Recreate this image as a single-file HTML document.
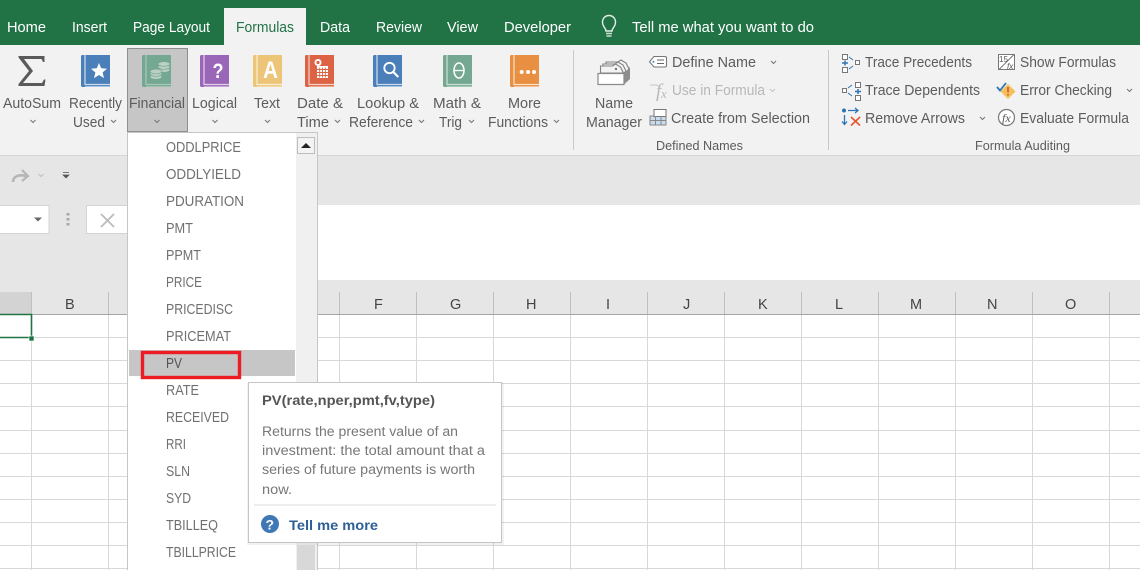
<!DOCTYPE html>
<html><head><meta charset="utf-8"><style>
html,body{margin:0;padding:0;background:#fff;width:1140px;height:570px;overflow:hidden}
svg{display:block;filter:blur(.3px)}
text{font-family:"Liberation Sans",sans-serif;font-size:14.5px;fill:#5c5c5c}
.tab{fill:#fff}
.m{fill:#707070;font-size:14.5px}
.g{font-size:12.5px}
.c{fill:#444;font-size:14.5px}
.chev{fill:none;stroke:#777;stroke-width:1.1}
</style></head><body>
<svg width="1140" height="570" viewBox="0 0 1140 570">
<rect width="1140" height="570" fill="#fff"/>
<!-- grid -->
<g stroke="#d8d8d8" stroke-width="1">
<path d="M0 337.5H1140M0 360.5H1140M0 383.5H1140M0 406.5H1140M0 430.5H1140M0 453.5H1140M0 476.5H1140M0 499.5H1140M0 522.5H1140M0 545.5H1140M0 568.5H1140"/>
<path d="M31.5 315V570M108.5 315V570M339.5 315V570M416.5 315V570M493.5 315V570M570.5 315V570M647.5 315V570M724.5 315V570M801.5 315V570M878.5 315V570M955.5 315V570M1032.5 315V570M1109.5 315V570"/>
</g>
<!-- grey zones -->
<rect x="0" y="155" width="1140" height="50" fill="#e6e6e6"/>
<rect x="0" y="205" width="318" height="75" fill="#e6e6e6"/>
<rect x="0" y="280" width="1140" height="35" fill="#e6e6e6"/>
<rect x="0" y="292" width="31" height="22" fill="#d3d3d3"/>
<path d="M0 314.5H1140" stroke="#a6a6a6"/>
<g stroke="#bfbfbf"><path d="M31.5 292V314M108.5 292V314M339.5 292V314M416.5 292V314M493.5 292V314M570.5 292V314M647.5 292V314M724.5 292V314M801.5 292V314M878.5 292V314M955.5 292V314M1032.5 292V314M1109.5 292V314"/></g>
<g>
<text class="c" x="65" y="309">B</text><text class="c" x="374" y="309">F</text><text class="c" x="450" y="309">G</text><text class="c" x="526" y="309">H</text><text class="c" x="606" y="309">I</text><text class="c" x="683" y="309">J</text><text class="c" x="758" y="309">K</text><text class="c" x="835" y="309">L</text><text class="c" x="910" y="309">M</text><text class="c" x="987" y="309">N</text><text class="c" x="1065" y="309">O</text>
</g>
<!-- selected cell -->
<path d="M0 314.5H31.5V337.5H0" fill="#fff" stroke="#217346" stroke-width="1.6"/>
<rect x="29" y="336" width="5" height="5" fill="#217346" stroke="#fff" stroke-width=".6"/>
<!-- formula bar -->
<rect x="-2" y="205.5" width="51" height="28" fill="#fff" stroke="#d4d4d4"/>
<path d="M34 217.5h8l-4 4z" fill="#666"/>
<g fill="#a8a8a8"><rect x="66.5" y="213" width="3" height="2.5"/><rect x="66.5" y="218" width="3" height="2.5"/><rect x="66.5" y="223" width="3" height="2.5"/></g>
<rect x="86.5" y="205.5" width="50" height="28" fill="#fff" stroke="#d4d4d4"/>
<path d="M101 214l13 13M114 214l-13 13" stroke="#bbb" stroke-width="1.8"/>
<!-- QAT -->
<path d="M13 182c0-5 5-8 13-6" fill="none" stroke="#b5b5b5" stroke-width="2.6"/>
<path d="M22 170l6 6-6 5" fill="none" stroke="#b5b5b5" stroke-width="2.2"/>
<path d="M38.5 174l2.5 2.500 2.5-2.500" fill="none" stroke="#bdbdbd"/>
<path d="M63 172.500h6M63 175h6l-3 3z" fill="#555" stroke="#555" stroke-width=".7"/>
<!-- title tabs -->
<rect x="0" y="0" width="1140" height="45" fill="#217346"/>
<rect x="224" y="8" width="82" height="38" fill="#f2f2f2"/>
<text class="tab" x="7" y="32" textLength="39" lengthAdjust="spacingAndGlyphs">Home</text>
<text class="tab" x="72" y="32" textLength="35" lengthAdjust="spacingAndGlyphs">Insert</text>
<text class="tab" x="133" y="32" textLength="77" lengthAdjust="spacingAndGlyphs">Page Layout</text>
<text x="236" y="32" textLength="58" lengthAdjust="spacingAndGlyphs" style="fill:#217346">Formulas</text>
<text class="tab" x="320" y="32" textLength="30" lengthAdjust="spacingAndGlyphs">Data</text>
<text class="tab" x="376" y="32" textLength="46" lengthAdjust="spacingAndGlyphs">Review</text>
<text class="tab" x="447" y="32" textLength="31" lengthAdjust="spacingAndGlyphs">View</text>
<text class="tab" x="504" y="32" textLength="67" lengthAdjust="spacingAndGlyphs">Developer</text>
<text class="tab" x="632" y="32" textLength="182" lengthAdjust="spacingAndGlyphs">Tell me what you want to do</text>
<path d="M606 31c0-3-3.500-4-3.500-9a6.500 6.500 0 0 1 13 0c0 5-3.500 6-3.500 9z" fill="none" stroke="#e4efe8" stroke-width="1.4"/>
<path d="M606 33.500h6M606.500 36h5" stroke="#cfe0d6" stroke-width="1.5"/>
<!-- ribbon -->
<rect x="0" y="45" width="1140" height="110" fill="#f2f2f2"/>
<path d="M0 155.500H1140" stroke="#d6d6d6"/>
<path d="M573.500 50V150M828.500 50V150" stroke="#c9c9c9"/>
<!-- Financial highlight -->
<rect x="127.500" y="48.500" width="60" height="83" fill="#c6c6c6" stroke="#8f8f8f"/>
<!-- Sigma -->
<path d="M18.500 56H44.500V62H43L41.500 59H24L33 71 23 83H42L44 79.500H45.500L44.500 86H18.500V84L29 71 18.500 57.500z" fill="#5a5a5a"/>
<!-- Books -->
<g transform="translate(81,55)"><path d="M1 0H29V32H1L0 31V1z" fill="#4a7fba"/><path d="M4 0V29.500H29" fill="none" stroke="#cfdeee" stroke-width="1.200"/><path d="M4 31.500H29" stroke="#a9c4e0"/><path d="M18 8l2.200 5.300 5.800.4-4.400 3.800 1.400 5.600-5-3.100-5 3.100 1.400-5.600-4.400-3.800 5.800-.4z" fill="#fff"/></g>
<g transform="translate(142,55)"><path d="M1 0H29V32H1L0 31V1z" fill="#74a892"/><path d="M4 0V29.500H29" fill="none" stroke="#a9c8b8" stroke-width="1.200"/><path d="M4 31.500H29" stroke="#9fc0b0"/>
<g fill="#bcd0c4" stroke="#74a892" stroke-width=".7"><ellipse cx="22" cy="15" rx="6" ry="2.300"/><ellipse cx="22" cy="12" rx="6" ry="2.300"/><ellipse cx="22" cy="9" rx="6" ry="2.300"/><ellipse cx="14" cy="22" rx="6" ry="2.300"/><ellipse cx="14" cy="19" rx="6" ry="2.300"/><ellipse cx="14" cy="16.500" rx="6" ry="2.300"/></g></g>
<g transform="translate(200,55)"><path d="M1 0H29V32H1L0 31V1z" fill="#9a66b8"/><path d="M4 0V29.500H29" fill="none" stroke="#e2d2ec" stroke-width="1.200"/><path d="M4 31.500H29" stroke="#c4a6d6"/><text x="12.500" y="23" textLength="11" lengthAdjust="spacingAndGlyphs" style="font-size:21px;font-weight:bold;fill:#fff">?</text></g>
<g transform="translate(253,55)"><path d="M1 0H29V32H1L0 31V1z" fill="#edc578"/><path d="M4 0V29.500H29" fill="none" stroke="#faeed6" stroke-width="1.200"/><path d="M4 31.500H29" stroke="#f3d9a6"/><text x="10" y="23" textLength="15" lengthAdjust="spacingAndGlyphs" style="font-size:24px;font-weight:bold;fill:#fff">A</text></g>
<g transform="translate(305,55)"><path d="M1 0H29V32H1L0 31V1z" fill="#dc6344"/><path d="M4 0V29.500H29" fill="none" stroke="#f4d3c8" stroke-width="1.200"/><path d="M4 31.500H29" stroke="#eba892"/><rect x="12" y="11" width="11" height="12" fill="#fff"/><circle cx="13" cy="7.500" r="3.500" fill="#fff"/><circle cx="13" cy="7.500" r="1.600" fill="#dc6344"/><path d="M14.700 12.500v10M17.500 12.500v10M20.300 12.500v10M12 14.500h11M12 17.500h11M12 20.500h11" stroke="#dc6344" stroke-width=".9"/></g>
<g transform="translate(373,55)"><path d="M1 0H29V32H1L0 31V1z" fill="#4a7fba"/><path d="M4 0V29.500H29" fill="none" stroke="#cfdeee" stroke-width="1.200"/><path d="M4 31.500H29" stroke="#a9c4e0"/><circle cx="16.500" cy="13" r="5.200" fill="none" stroke="#fff" stroke-width="1.800"/><path d="M20.300 17l5 5" stroke="#fff" stroke-width="2.200"/></g>
<g transform="translate(443,55)"><path d="M1 0H29V32H1L0 31V1z" fill="#74a892"/><path d="M4 0V29.500H29" fill="none" stroke="#d0e2d8" stroke-width="1.200"/><path d="M4 31.500H29" stroke="#a6c8b6"/><ellipse cx="16" cy="15.500" rx="5" ry="7.500" fill="none" stroke="#fff" stroke-width="1.500"/><path d="M11 15.500h10" stroke="#fff" stroke-width="1.300"/></g>
<g transform="translate(510,55)"><path d="M1 0H29V32H1L0 31V1z" fill="#e98f42"/><path d="M4 0V29.500H29" fill="none" stroke="#f9e0c8" stroke-width="1.200"/><path d="M4 31.500H29" stroke="#f2c094"/><circle cx="11.700" cy="17" r="2" fill="#fff"/><circle cx="18" cy="17" r="2" fill="#fff"/><circle cx="24" cy="17" r="2" fill="#fff"/></g>
<!-- Ribbon labels -->
<text x="3" y="108" textLength="58" lengthAdjust="spacingAndGlyphs">AutoSum</text>
<text x="69" y="108" textLength="53" lengthAdjust="spacingAndGlyphs">Recently</text>
<text x="73" y="127" textLength="32" lengthAdjust="spacingAndGlyphs">Used</text>
<text x="129" y="108" textLength="56" lengthAdjust="spacingAndGlyphs">Financial</text>
<text x="192" y="108" textLength="45" lengthAdjust="spacingAndGlyphs">Logical</text>
<text x="254" y="108" textLength="26" lengthAdjust="spacingAndGlyphs">Text</text>
<text x="297" y="108" textLength="46" lengthAdjust="spacingAndGlyphs">Date &amp;</text>
<text x="297" y="127" textLength="32" lengthAdjust="spacingAndGlyphs">Time</text>
<text x="357" y="108" textLength="62" lengthAdjust="spacingAndGlyphs">Lookup &amp;</text>
<text x="349" y="127" textLength="64" lengthAdjust="spacingAndGlyphs">Reference</text>
<text x="433" y="108" textLength="48" lengthAdjust="spacingAndGlyphs">Math &amp;</text>
<text x="439" y="127" textLength="23" lengthAdjust="spacingAndGlyphs">Trig</text>
<text x="508" y="108" textLength="33" lengthAdjust="spacingAndGlyphs">More</text>
<text x="488" y="127" textLength="60" lengthAdjust="spacingAndGlyphs">Functions</text>
<g class="chev">
<path d="M30.500 120l2.500 2.500 2.500-2.500M111 120l2.500 2.500 2.500-2.500M154.500 120l2.500 2.500 2.500-2.500M212.500 120l2.500 2.500 2.500-2.500M265 120l2.500 2.500 2.500-2.500M335 120l2.500 2.500 2.500-2.500M419 120l2.500 2.500 2.500-2.500M469 120l2.500 2.500 2.500-2.500M554 120l2.500 2.500 2.500-2.500M771 61l2.500 2.500 2.500-2.500M980 117l2.500 2.500 2.500-2.500M1127 89l2.500 2.500 2.500-2.500"/>
</g>
<path d="M770 89l2.500 2.500 2.500-2.500" fill="none" stroke="#c4c4c4"/>
<!-- Defined names -->
<text x="595" y="108" textLength="38" lengthAdjust="spacingAndGlyphs">Name</text>
<text x="586" y="127" textLength="56" lengthAdjust="spacingAndGlyphs">Manager</text>
<text x="672" y="67" textLength="84" lengthAdjust="spacingAndGlyphs">Define Name</text>
<text x="672" y="95" textLength="93" lengthAdjust="spacingAndGlyphs" style="fill:#b8b8b8">Use in Formula</text>
<text x="671" y="123" textLength="139" lengthAdjust="spacingAndGlyphs">Create from Selection</text>
<text class="g" x="656" y="150" textLength="87" lengthAdjust="spacingAndGlyphs">Defined Names</text>
<!-- Name manager icon -->
<g fill="#f4f4f4" stroke="#808080" stroke-width="1.100">
<path d="M606 62h12l3-2 5 3 3 6-3 4H606z"/>
<path d="M603 64h12l3-2 5 3 3 6-3 3H603z"/>
<path d="M600.500 66h12l3-2 5 3 3 6H600.500z"/>
</g>
<path d="M598 73.500H624V84.500H598z" fill="#fff" stroke="#8a8a8a" stroke-width="1.200"/>
<path d="M624 73.500L630 67V79L624 84.500z" fill="#8d8d8d"/>
<circle cx="616" cy="69" r="1.200" fill="#777"/>
<!-- define name icon -->
<path d="M654 56.500H665a1.500 1.500 0 0 1 1.500 1.500V65.500a1.500 1.500 0 0 1-1.500 1.500H654L649.500 61.800z" fill="#fff" stroke="#777" stroke-width="1.100"/>
<circle cx="653.500" cy="61.800" r="1" fill="#4a7fba"/>
<path d="M657 60h7M657 63.500h7" stroke="#666"/>
<!-- use in formula -->
<path d="M650 85h7l3 3" fill="none" stroke="#c4c4c4"/>
<text x="656" y="97" style="font-family:'Liberation Serif',serif;font-style:italic;font-size:19px;fill:#b8b8b8">f</text>
<text x="661" y="98" style="font-family:'Liberation Serif',serif;font-style:italic;font-size:13px;fill:#b8b8b8">x</text>
<!-- create from selection -->
<rect x="650" y="116" width="16" height="9" fill="#c9dcee" stroke="#888"/>
<rect x="654" y="109.500" width="12" height="7" fill="#fff" stroke="#777"/>
<path d="M655.500 116v9M661 116v9M650 120.500h16" stroke="#888"/>
<!-- Auditing -->
<text x="865" y="67" textLength="107" lengthAdjust="spacingAndGlyphs">Trace Precedents</text>
<text x="865" y="95" textLength="115" lengthAdjust="spacingAndGlyphs">Trace Dependents</text>
<text x="865" y="123" textLength="100" lengthAdjust="spacingAndGlyphs">Remove Arrows</text>
<text x="1020" y="67" textLength="96" lengthAdjust="spacingAndGlyphs">Show Formulas</text>
<text x="1020" y="95" textLength="92" lengthAdjust="spacingAndGlyphs">Error Checking</text>
<text x="1020" y="123" textLength="109" lengthAdjust="spacingAndGlyphs">Evaluate Formula</text>
<text class="g" x="975" y="150" textLength="95" lengthAdjust="spacingAndGlyphs">Formula Auditing</text>
<!-- trace precedents -->
<g fill="#fff" stroke="#777"><rect x="842.500" y="54.500" width="5" height="5"/><rect x="842.500" y="67.500" width="5" height="5"/><rect x="855.500" y="60.500" width="4" height="4"/></g>
<path d="M842 63h6M845 60.500v5" stroke="#2e75b6" stroke-width="1.500"/>
<path d="M849 57l4 3M849 69l4-3" stroke="#2e75b6"/>
<!-- trace dependents -->
<g fill="#fff" stroke="#777"><rect x="842.500" y="88.500" width="4" height="4"/><rect x="855.500" y="82.500" width="5" height="5"/><rect x="855.500" y="95.500" width="5" height="5"/></g>
<path d="M855 91.500h6M858 89v5" stroke="#2e75b6" stroke-width="1.500"/>
<path d="M848 88l4-3M848 93l4 3" stroke="#2e75b6"/>
<!-- remove arrows -->
<circle cx="844" cy="110.500" r="2" fill="#2e75b6"/>
<path d="M848 110.500h10M855 108l3 2.500-3 2.500M844.500 115v9M842 121.500l2.500 3 2.500-3" fill="none" stroke="#2e75b6" stroke-width="1.300"/>
<path d="M851 117l9 8.500M860 117l-9 8.500" stroke="#e2582e" stroke-width="1.600"/>
<!-- show formulas -->
<rect x="998.500" y="54.500" width="16" height="15" fill="#fff" stroke="#777"/>
<path d="M1014 54.500L999 69.500" stroke="#777"/>
<text x="999" y="62" style="font-size:8px;fill:#555">15</text>
<text x="1007" y="69" style="font-size:8px;font-style:italic;fill:#555">fx</text>
<!-- error checking -->
<path d="M997 87l3 3.500 6-7.500" fill="none" stroke="#2e75b6" stroke-width="1.800"/>
<path d="M1008 84l7.500 7.500-7.500 7.500-7.500-7.500z" fill="#f2c15c"/>
<path d="M1008 87v5.500M1008 94v1.500" stroke="#d8492c" stroke-width="1.500"/>
<!-- evaluate -->
<circle cx="1006.500" cy="117.500" r="8" fill="#fff" stroke="#777" stroke-width="1.200"/>
<text x="1002" y="122" style="font-family:'Liberation Serif',serif;font-style:italic;font-size:12px;fill:#555">fx</text>
<!-- Dropdown -->
<rect x="127.500" y="132.500" width="190" height="440" fill="#fff" stroke="#c6c6c6"/>
<rect x="296" y="133" width="21" height="437" fill="#f0f0f0"/>
<rect x="297.500" y="137.500" width="17" height="16" fill="#f3f3f3" stroke="#bdbdbd"/>
<path d="M301 148l5-5 5 5z" fill="#222"/>
<rect x="297" y="545" width="18" height="25" fill="#d8d8d8"/>
<rect x="129" y="350" width="166" height="26" fill="#c6c6c6"/>
<text class="m" x="166" y="152" textLength="75" lengthAdjust="spacingAndGlyphs">ODDLPRICE</text>
<text class="m" x="166" y="179" textLength="75" lengthAdjust="spacingAndGlyphs">ODDLYIELD</text>
<text class="m" x="166" y="206" textLength="78" lengthAdjust="spacingAndGlyphs">PDURATION</text>
<text class="m" x="166" y="233" textLength="27" lengthAdjust="spacingAndGlyphs">PMT</text>
<text class="m" x="166" y="260" textLength="35" lengthAdjust="spacingAndGlyphs">PPMT</text>
<text class="m" x="166" y="287" textLength="36" lengthAdjust="spacingAndGlyphs">PRICE</text>
<text class="m" x="166" y="314" textLength="67" lengthAdjust="spacingAndGlyphs">PRICEDISC</text>
<text class="m" x="166" y="341" textLength="65" lengthAdjust="spacingAndGlyphs">PRICEMAT</text>
<text class="m" x="166" y="368" textLength="16" lengthAdjust="spacingAndGlyphs" style="fill:#555">PV</text>
<text class="m" x="166" y="395" textLength="33" lengthAdjust="spacingAndGlyphs">RATE</text>
<text class="m" x="166" y="422" textLength="63" lengthAdjust="spacingAndGlyphs">RECEIVED</text>
<text class="m" x="166" y="449" textLength="20" lengthAdjust="spacingAndGlyphs">RRI</text>
<text class="m" x="166" y="476" textLength="24" lengthAdjust="spacingAndGlyphs">SLN</text>
<text class="m" x="166" y="503" textLength="25" lengthAdjust="spacingAndGlyphs">SYD</text>
<text class="m" x="166" y="530" textLength="52" lengthAdjust="spacingAndGlyphs">TBILLEQ</text>
<text class="m" x="166" y="557" textLength="70" lengthAdjust="spacingAndGlyphs">TBILLPRICE</text>
<!-- Red box -->
<rect x="142.500" y="352.500" width="97" height="25" fill="none" stroke="#ed1c24" stroke-width="3.400"/>
<!-- Tooltip -->
<rect x="247" y="383" width="257" height="162" fill="#000" opacity=".05"/>
<rect x="248.500" y="382.500" width="253" height="160" fill="#fff" stroke="#c4c4c4"/>
<text x="262" y="405" textLength="173" lengthAdjust="spacingAndGlyphs" style="font-size:13.500px;font-weight:bold;fill:#555">PV(rate,nper,pmt,fv,type)</text>
<text x="262" y="436" textLength="196" lengthAdjust="spacingAndGlyphs" style="font-size:13.500px;fill:#777">Returns the present value of an</text>
<text x="262" y="455" textLength="223" lengthAdjust="spacingAndGlyphs" style="font-size:13.500px;fill:#777">investment: the total amount that a</text>
<text x="262" y="474" textLength="213" lengthAdjust="spacingAndGlyphs" style="font-size:13.500px;fill:#777">series of future payments is worth</text>
<text x="262" y="494" textLength="30" lengthAdjust="spacingAndGlyphs" style="font-size:13.500px;fill:#777">now.</text>
<path d="M254 505H496" stroke="#e8e8e8" stroke-width="1.500"/>
<circle cx="270" cy="524" r="9" fill="#3f78b5"/>
<text x="265.500" y="529.500" style="font-size:14px;font-weight:bold;fill:#fff">?</text>
<text x="289" y="530" textLength="89" lengthAdjust="spacingAndGlyphs" style="font-size:14px;font-weight:bold;fill:#2d5f96">Tell me more</text>
</svg>
</body></html>
